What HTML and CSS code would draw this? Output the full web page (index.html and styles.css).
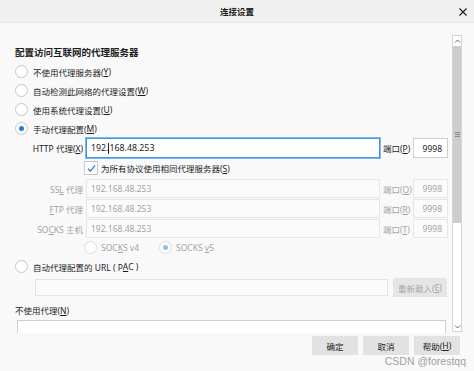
FILE: index.html
```html
<!DOCTYPE html>
<html lang="zh-CN">
<head>
    <meta charset="UTF-8">
    <title>连接设置</title>
    <link rel="stylesheet" href="styles.css">
</head>
<body>

<div class="dialog">
    <div class="titlebar">
        <span class="title">连接设置</span>
        <svg class="close" width="8" height="8" viewBox="0 0 8 8"><path d="M0.5 0.5L7.5 7.5M7.5 0.5L0.5 7.5" stroke="#222" stroke-width="1.2"/></svg>
    </div>

    <div class="main">
        <div class="content">
            <div class="heading">配置访问互联网的代理服务器</div>
            <div class="radio-row"><span class="radio"></span>不使用代理服务器(<u>Y</u>)</div>
            <div class="radio-row"><span class="radio"></span>自动检测此网络的代理设置(<u>W</u>)</div>
            <div class="radio-row"><span class="radio"></span>使用系统代理设置(<u>U</u>)</div>
            <div class="radio-row"><span class="radio checked"></span>手动代理配置(<u>M</u>)</div>

            <!-- proxy rows -->
            <div class="proxy-row http">
                <span class="plabel">HTTP 代理(<u>X</u>)</span>
                <span class="field focus">192.<span class="caret"></span>168.48.253</span>
                <span class="port-label">端口(<u>P</u>)</span>
                <span class="port">9998</span>
            </div>
            <div class="check-row"><span class="checkbox"><svg width="11" height="11" viewBox="0 0 11 11"><path d="M2 5.8L4.3 8.2L9 2.3" fill="none" stroke="#2f7fd8" stroke-width="1.3"/></svg></span>为所有协议使用相同代理服务器(<u>S</u>)</div>
            <div class="proxy-row disabled">
                <span class="plabel">SS<u>L</u> 代理</span>
                <span class="field">192.168.48.253</span>
                <span class="port-label">端口(<u>O</u>)</span>
                <span class="port">9998</span>
            </div>
            <div class="proxy-row disabled">
                <span class="plabel"><u>F</u>TP 代理</span>
                <span class="field">192.168.48.253</span>
                <span class="port-label">端口(<u>R</u>)</span>
                <span class="port">9998</span>
            </div>
            <div class="proxy-row disabled">
                <span class="plabel">SO<u>C</u>KS 主机</span>
                <span class="field">192.168.48.253</span>
                <span class="port-label">端口(<u>T</u>)</span>
                <span class="port">9998</span>
            </div>
            <div class="socks-row">
                <span class="radio dim"></span><span class="socks-label">SOC<u>K</u>S v4</span>
                <span class="radio dim checked"></span><span>SOCKS <u>v</u>5</span>
            </div>

            <div class="radio-row"><span class="radio"></span>自动代理配置的 URL ( P<u>A</u>C )</div>
            <div class="pac-row">
                <span class="pac-field"></span>
                <span class="reload">重新载入(<u>E</u>)</span>
            </div>

            <div class="noproxy-label">不使用代理(<u>N</u>)</div>
            <div class="textarea"></div>
        </div>

        <div class="scrollbar">
            <div class="arrow up"><svg width="7" height="5" viewBox="0 0 7 5"><path d="M1 3.5L3.5 1L6 3.5" fill="none" stroke="#666" stroke-width="1"/></svg></div>
            <div class="thumb"><span class="grip"></span></div>
            <div class="track"></div>
            <div class="arrow down"><svg width="7" height="5" viewBox="0 0 7 5"><path d="M1 1.5L3.5 4L6 1.5" fill="none" stroke="#666" stroke-width="1"/></svg></div>
        </div>
    </div>

    <div class="footer">
        <span class="button">确定</span>
        <span class="button">取消</span>
        <span class="button">帮助(<u>H</u>)</span>
    </div>
    <div class="watermark">CSDN @forestqq</div>
</div>

</body>
</html>
```

FILE: styles.css
```css
body {
    margin: 0;
    font-family: "Noto Sans", "Noto Sans CJK SC", sans-serif;
    font-size: 8.5px;
    color: #1c1c1c;
    background-color: #f9f9fa;
}
u {
    text-decoration: underline;
    text-underline-offset: 1px;
}
.dialog {
    width: 474px;
    height: 371px;
    overflow: hidden;
    background-color: #f9f9fa;
}
.titlebar {
    height: 22px;
    background-color: #f0f0f0;
    border-bottom: 1px solid #e4e4e4;
    display: flex;
    align-items: center;
    justify-content: center;
    position: relative;
}
.title {
    font-weight: bold;
    font-size: 8.5px;
}
.close {
    position: absolute;
    right: 7px;
    top: 8px;
}
.main {
    height: 310px;
    display: flex;
    overflow: hidden;
}
.content {
    width: 437px;
    padding: 20px 0 0 15px;
}
.heading {
    height: 19px;
    line-height: 19px;
    font-weight: bold;
    font-size: 9.5px;
}
.radio-row {
    height: 19px;
    display: flex;
    align-items: center;
}
.radio {
    width: 11px;
    height: 11px;
    border: 1px solid #c6c6c6;
    border-radius: 50%;
    background-color: white;
    margin: 0 5px 0 0;
    display: inline-flex;
    align-items: center;
    justify-content: center;
    flex-shrink: 0;
}
.radio.checked::after {
    content: "";
    width: 5px;
    height: 5px;
    border-radius: 50%;
    background-color: #1f7fd8;
}
.radio.dim {
    border-color: #dedede;
}
.radio.dim.checked::after {
    background-color: #8fc0ec;
}
.proxy-row {
    display: grid;
    grid-template-columns: 68px 294px 27px 35px;
    column-gap: 3px;
    align-items: center;
    height: 19px;
    margin-top: 1px;
}
.proxy-row.http {
    height: 20px;
    margin-top: 0;
}
.plabel {
    text-align: right;
}
.field, .port {
    height: 100%;
    box-sizing: border-box;
    border: 1px solid #cfcfcf;
    background-color: white;
    display: flex;
    align-items: center;
    padding-left: 4px;
}
.port {
    justify-content: flex-end;
    padding: 0 5px 0 0;
}
.field.focus {
    border: 1px solid #3d95e6;
    box-shadow: 0 0 0 1px #7ab8f0;
    font-size: 8.8px;
}
.caret {
    display: inline-block;
    width: 1px;
    height: 11px;
    background-color: #222;
}
.port-label {
    white-space: nowrap;
}
.disabled {
    color: #a3a3a3;
}
.disabled .field, .disabled .port {
    border-color: #e6e6e6;
    background-color: #fbfbfb;
}
.check-row {
    height: 20px;
    display: flex;
    align-items: center;
    padding-left: 69px;
}
.checkbox {
    width: 12px;
    height: 12px;
    border: 1px solid #c8c8c8;
    background-color: white;
    margin-right: 3px;
    display: flex;
    align-items: center;
    justify-content: center;
}
.socks-row {
    height: 19px;
    display: flex;
    align-items: center;
    padding-left: 69px;
    color: #a3a3a3;
}
.socks-row .radio {
    margin-right: 4px;
}
.socks-label {
    margin-right: 20px;
}
.pac-row {
    display: flex;
    align-items: center;
    gap: 5px;
    height: 19px;
    margin-top: 2px;
    padding-left: 20px;
}
.pac-field {
    width: 353px;
    height: 17px;
    border: 1px solid #e4e4e4;
    background-color: #fbfbfb;
    box-sizing: border-box;
}
.reload {
    width: 54px;
    height: 19px;
    background-color: #e5e5e6;
    color: #a8a8a8;
    display: flex;
    align-items: center;
    justify-content: center;
}
.noproxy-label {
    height: 18px;
    line-height: 18px;
    margin-top: 5px;
}
.textarea {
    width: 427px;
    height: 40px;
    margin-left: 2px;
    border: 1px solid #cfcfcf;
    background-color: white;
}
/* scrollbar */
.scrollbar {
    width: 8px;
    height: 295px;
    margin: 12px 0 0 0;
    border: 1px solid #d6d6d6;
    background-color: white;
    display: flex;
    flex-direction: column;
}
.arrow {
    height: 10px;
    display: flex;
    align-items: center;
    justify-content: center;
}
.thumb {
    height: 177px;
    background-color: #cdcdcd;
    display: flex;
    align-items: center;
    justify-content: center;
}
.grip {
    width: 5px;
    height: 5px;
    border-top: 1px solid #888;
    border-bottom: 1px solid #888;
    box-sizing: border-box;
    background: linear-gradient(#888, #888) center / 100% 1px no-repeat;
}
.track {
    flex: 1;
}
.footer {
    display: flex;
    justify-content: flex-end;
    gap: 5px;
    padding: 3px 14px 0 0;
}
.button {
    width: 46px;
    height: 19px;
    background-color: #e2e2e3;
    display: flex;
    align-items: center;
    justify-content: center;
}
.watermark {
    text-align: right;
    padding-right: 8px;
    margin-top: 0;
    font-family: "Liberation Sans", Arial, sans-serif;
    font-size: 10.5px;
    line-height: 12px;
    color: #a0a0a0;
}
```
